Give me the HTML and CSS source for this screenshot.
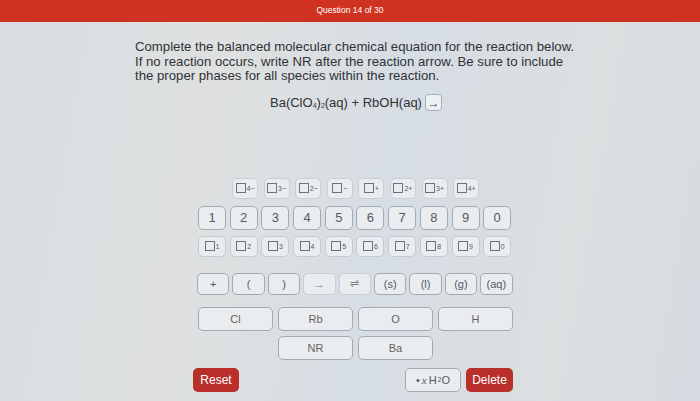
FILE: index.html
```html
<!DOCTYPE html>
<html>
<head>
<meta charset="utf-8">
<link rel="stylesheet" href="styles.css">
</head>
<body>
<div class="header">Question 14 of 30</div>
<div class="content">
  <p class="prompt">Complete the balanced molecular chemical equation for the reaction below.<br>If no reaction occurs, write NR after the reaction arrow. Be sure to include<br>the proper phases for all species within the reaction.</p>
  <div class="equation">
    <span>Ba(ClO<sub>4</sub>)<sub>2</sub>(aq) + RbOH(aq)</span>
    <span class="answer"><span class="arrow">&rarr;</span></span>
  </div>
  <div class="pad">
    <div class="row charges">
      <div class="key"><span class="sq"></span><sup>4−</sup></div>
      <div class="key"><span class="sq"></span><sup>3−</sup></div>
      <div class="key"><span class="sq"></span><sup>2−</sup></div>
      <div class="key"><span class="sq"></span><sup>−</sup></div>
      <div class="key"><span class="sq"></span><sup>+</sup></div>
      <div class="key"><span class="sq"></span><sup>2+</sup></div>
      <div class="key"><span class="sq"></span><sup>3+</sup></div>
      <div class="key"><span class="sq"></span><sup>4+</sup></div>
    </div>
    <div class="row nums">
      <div class="key">1</div><div class="key">2</div><div class="key">3</div><div class="key">4</div><div class="key">5</div>
      <div class="key">6</div><div class="key">7</div><div class="key">8</div><div class="key">9</div><div class="key">0</div>
    </div>
    <div class="row subs">
      <div class="key"><span class="sq"></span><sub>1</sub></div>
      <div class="key"><span class="sq"></span><sub>2</sub></div>
      <div class="key"><span class="sq"></span><sub>3</sub></div>
      <div class="key"><span class="sq"></span><sub>4</sub></div>
      <div class="key"><span class="sq"></span><sub>5</sub></div>
      <div class="key"><span class="sq"></span><sub>6</sub></div>
      <div class="key"><span class="sq"></span><sub>7</sub></div>
      <div class="key"><span class="sq"></span><sub>8</sub></div>
      <div class="key"><span class="sq"></span><sub>9</sub></div>
      <div class="key"><span class="sq"></span><sub>0</sub></div>
    </div>
    <div class="row ops">
      <div class="key">+</div><div class="key">(</div><div class="key">)</div>
      <div class="key light">&rarr;</div><div class="key light">&#8652;</div>
      <div class="key">(s)</div><div class="key">(l)</div><div class="key">(g)</div><div class="key">(aq)</div>
    </div>
    <div class="row elems">
      <div class="key">Cl</div><div class="key">Rb</div><div class="key">O</div><div class="key">H</div>
    </div>
    <div class="row elems">
      <div class="blank"></div><div class="key">NR</div><div class="key">Ba</div><div class="blank"></div>
    </div>
    <div class="row actions">
      <div class="btn red reset">Reset</div>
      <div class="spacer"></div>
      <div class="key water">&bull; <i>x</i> H<sub>2</sub>O</div>
      <div class="btn red">Delete</div>
    </div>
  </div>
</div>
</body>
</html>
```
FILE: styles.css
```css
* { box-sizing: border-box; }
html, body { margin: 0; padding: 0; }
body {
  width: 700px;
  height: 401px;
  overflow: hidden;
  font-family: "Liberation Sans", Arial, sans-serif;
  background: linear-gradient(100deg, #d8dde2 0%, #dfe1e0 30%, #d6dde4 55%, #dcdfe0 80%, #d5dbe1 100%);
  color: #333;
}
.header {
  height: 22px;
  background: #cf3220;
  color: #fff;
  font-size: 8.5px;
  text-align: center;
  line-height: 20px;
}
.content {
  padding-top: 18px;
}
.prompt {
  margin: 0 0 0 135px;
  width: 470px;
  font-size: 13.2px;
  line-height: 14.5px;
  color: #2f3236;
}
.equation {
  margin: 10px 0 0 270px;
  display: flex;
  align-items: center;
  font-size: 13px;
  color: #2f3236;
  height: 18px;
}
.equation sub { font-size: 7px; vertical-align: -1px; }
.answer {
  margin-left: 3px;
  width: 17px;
  height: 17px;
  border: 1px solid #9fb0c0;
  border-radius: 4px;
  background: #eef1f4;
  display: flex;
  align-items: center;
  justify-content: center;
}
.arrow { font-size: 12px; line-height: 12px; color: #3a3f48; }
.pad {
  margin: 66px 0 0 198px;
  width: 315px;
  display: flex;
  flex-direction: column;
}
.row { display: flex; }
.key {
  background: #e9edf0;
  border: 1px solid #a2abb3;
  border-radius: 5px;
  display: flex;
  align-items: center;
  justify-content: center;
  color: #555a62;
  font-size: 11px;
}
.sq {
  display: inline-block;
  width: 10px;
  height: 10px;
  border: 1px solid #6d7278;
}
.key sup { font-size: 7px; vertical-align: 4px; margin-left: 1px; }
.key sub { font-size: 7px; vertical-align: -3px; margin-left: 1px; }
.charges { margin-left: 34px; gap: 5.6px; }
.charges .key { width: 26px; height: 21px; border-color: #c8d0d6; }
.nums { margin-top: 7px; gap: 3.7px; }
.nums .key { width: 28px; height: 24px; font-size: 13px; }
.subs { margin-top: 6px; gap: 3.7px; }
.subs .key { width: 28px; height: 21px; border-color: #c4ccd2; }
.ops { margin-top: 16px; gap: 3px; margin-left: -1px; }
.ops .key { width: 32.4px; height: 22px; font-size: 11px; }
.ops .light { border-color: #c8d0d6; color: #7a8088; }
.elems { gap: 5px; }
.elems .key, .elems .blank { width: 75px; height: 24px; font-size: 11px; color: #6a5e58; }
.ops + .elems { margin-top: 12px; }
.elems + .elems { margin-top: 5px; }
.actions { margin-top: 8px; margin-left: -5px; align-items: center; width: 320px; }
.spacer { flex: 1; }
.btn {
  height: 24px;
  border-radius: 5px;
  color: #fff;
  font-size: 12px;
  display: flex;
  align-items: center;
  justify-content: center;
}
.red { background: #b9302a; }
.reset { width: 46px; }
.water { width: 56px; height: 24px; font-size: 11px; margin-right: 5px; }
.water i { font-family: "Liberation Serif", serif; margin: 0 2px; }
.btn:last-child { width: 47px; }
```
